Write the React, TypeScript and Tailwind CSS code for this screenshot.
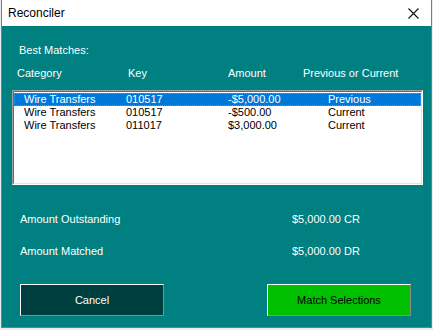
import React from "react";

const rows = [
  { cat: "Wire Transfers", key: "010517", amt: "-$5,000.00", pc: "Previous", sel: true },
  { cat: "Wire Transfers", key: "010517", amt: "-$500.00", pc: "Current", sel: false },
  { cat: "Wire Transfers", key: "011017", amt: "$3,000.00", pc: "Current", sel: false },
];

export default function App() {
  return (
    <div
      className="w-[433px] h-[330px] bg-[#e9edf1] relative overflow-hidden"
      style={{ fontFamily: '"Liberation Sans", Arial, sans-serif' }}
    >
      <div className="absolute left-[1px] top-0 w-[431px] h-[328px] border-x border-b border-[#3c8ad6] flex flex-col">
        <div className="h-[26px] bg-white flex items-center justify-between pl-[6px] pr-[12px] shrink-0">
          <span className="text-[12px] text-black">Reconciler</span>
          <svg width="11" height="11" viewBox="0 0 11 11">
            <path d="M0.5 0.5 L10.5 10.5 M10.5 0.5 L0.5 10.5" stroke="#111" strokeWidth="1.1" />
          </svg>
        </div>
        <div className="flex-1 bg-[#008080] text-[11px] text-white flex flex-col">
          <div className="pl-[17px] pt-[18px] h-[34px] leading-[13px]">Best Matches:</div>
          <div className="flex h-[24px] pt-[7px] leading-[13px]">
            <span className="pl-[15px] w-[126px]">Category</span>
            <span className="w-[100px]">Key</span>
            <span className="w-[75px]">Amount</span>
            <span>Previous or Current</span>
          </div>
          <div className="ml-[10px] mt-[6px] w-[411px] h-[95px] border border-t-[#a0a0a0] border-l-[#a0a0a0] border-b-white border-r-white">
            <div className="h-full border border-t-[#696969] border-l-[#696969] border-b-[#e3e3e3] border-r-[#e3e3e3] bg-white pt-[1px] text-black">
              {rows.map((r, i) => (
                <div
                  key={i}
                  className={
                    "flex h-[13px] leading-[13px] " +
                    (r.sel ? "bg-[#0078d7] text-white outline outline-1 outline-dotted outline-[#d08020] -outline-offset-1" : "")
                  }
                >
                  <span className="pl-[10px] w-[112px]">{r.cat}</span>
                  <span className="w-[102px]">{r.key}</span>
                  <span className="w-[100px]">{r.amt}</span>
                  <span>{r.pc}</span>
                </div>
              ))}
            </div>
          </div>
          <div className="flex h-[13px] leading-[13px] mt-[28px]">
            <span className="pl-[18px] w-[290px]">Amount Outstanding</span>
            <span>$5,000.00 CR</span>
          </div>
          <div className="flex h-[13px] leading-[13px] mt-[19px]">
            <span className="pl-[18px] w-[290px]">Amount Matched</span>
            <span>$5,000.00 DR</span>
          </div>
          <div className="flex justify-between pl-[18px] pr-[20px] mt-[26px]">
            <div className="w-[144px] h-[32px] bg-[#003f3f] border border-t-white border-l-white border-b-[#8a8a8a] border-r-[#8a8a8a] flex items-center justify-center text-white">
              Cancel
            </div>
            <div className="w-[144px] h-[32px] bg-[#00c000] border border-t-white border-l-white border-b-[#8a8a8a] border-r-[#8a8a8a] flex items-center justify-center text-black">
              Match Selections
            </div>
          </div>
        </div>
      </div>
    </div>
  );
}
